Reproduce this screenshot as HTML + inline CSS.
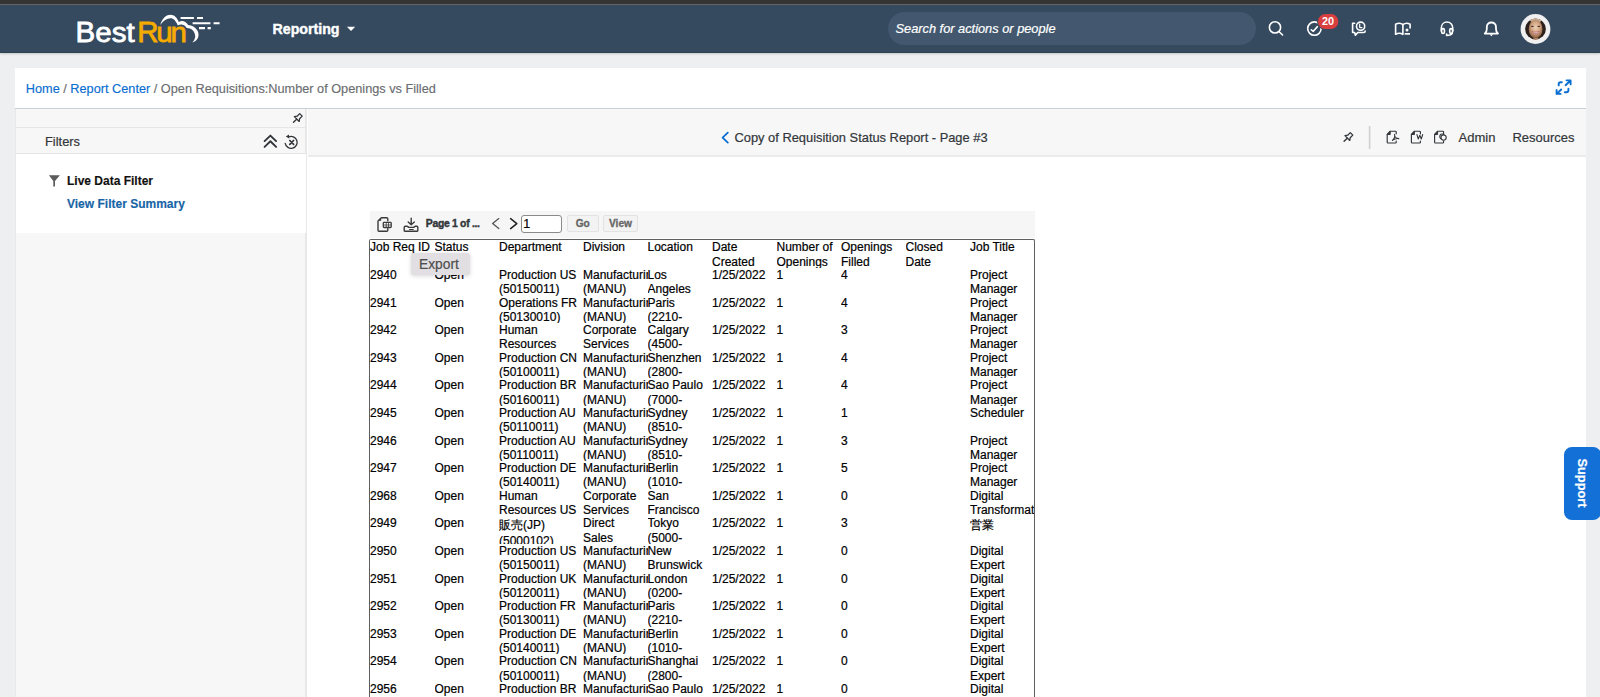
<!DOCTYPE html>
<html><head><meta charset="utf-8">
<style>
*{box-sizing:border-box;margin:0;padding:0}
html,body{width:1600px;height:697px;overflow:hidden;background:#edeff0;font-family:"Liberation Sans",sans-serif;position:relative}
.abs{position:absolute}
#topstrip{left:0;top:0;width:1600px;height:5px;background:#343434;border-bottom:1px solid #666}
#shell{left:0;top:5px;width:1600px;height:47.5px;background:#354a5f;border-bottom:1px solid #2f4154;box-shadow:0 1px 2px rgba(0,0,0,.18)}
#logo{left:75.6px;top:14.2px;font-size:29.5px;color:#fff;line-height:36px;-webkit-text-stroke:0.8px #fff;white-space:nowrap}
#logo .o{color:#f5aa00;-webkit-text-stroke:0.8px #f5aa00;letter-spacing:-2.2px;margin-left:2.6px}
#logo .x{display:inline-block;transform:scaleY(0.95);transform-origin:0 27.2px}
#reporting{left:272.5px;top:20px;font-weight:bold;font-size:14.2px;color:#fff;line-height:18px;-webkit-text-stroke:0.4px #fff}
#search{left:887.5px;top:12px;width:368px;height:33px;border-radius:16.5px;background:#43586e}
#search span{position:absolute;left:8px;top:9px;-webkit-text-stroke:0.2px #fff;font-style:italic;font-size:12.8px;color:#fff;line-height:16px}
#card{left:15px;top:68px;width:1571px;height:640px;background:#fff}
#bc{left:25.8px;top:81px;font-size:12.72px;line-height:16px;color:#6a6d70;-webkit-text-stroke:0.15px #6a6d70}
#bc a{-webkit-text-stroke:0.15px #0a6ed1}
#bc a{color:#0a6ed1;text-decoration:none}
#hline{left:15px;top:108px;width:1571px;height:1px;background:#c8d1da}
#lp{left:15px;top:109px;width:292px;height:600px;background:#f7f7f7;border-right:2px solid #e8e8e8;border-left:1px solid #e8e8e8}
#lpdiv1{left:16px;top:127px;width:290px;height:1px;background:#e6e6e6}
#lpdiv2{left:16px;top:153px;width:290px;height:1px;background:#e6e6e6}
#lpwhite{left:16px;top:154px;width:290px;height:78.5px;background:#fff}
#filters{left:45px;top:133.5px;font-size:12.86px;color:#32363a;-webkit-text-stroke:0.2px #32363a;line-height:16px}
#ldf{left:67px;top:174px;font-size:12px;font-weight:bold;color:#111;line-height:14px;-webkit-text-stroke:0.15px #111}
#vfs{left:67px;top:196.5px;font-size:12px;font-weight:bold;color:#1764a6;line-height:14px;-webkit-text-stroke:0.15px #1764a6}
#rph{left:308px;top:109px;width:1278px;height:48px;background:#f7f7f7;border-bottom:2px solid #ebebeb}
#title{left:734.5px;top:129.5px;font-size:12.86px;color:#32363a;-webkit-text-stroke:0.2px #32363a;line-height:16px}
#admin{left:1458.5px;top:130px;font-size:13.05px;color:#32363a;-webkit-text-stroke:0.2px #32363a;line-height:16px}
#resources{left:1512.5px;top:130px;font-size:12.97px;color:#32363a;-webkit-text-stroke:0.2px #32363a;line-height:16px}
#tb{left:370px;top:211px;width:665px;height:27px;background:#f6f6f6}
#tbl{left:369px;top:239px;width:666px;height:470px;padding-top:0.4px;border:1px solid #5e5e5e;border-bottom:none;border-radius:2px 2px 0 0;background:#fff;overflow:hidden}
.r{display:flex;height:27.6px;overflow:hidden}
.c{width:64.5px;flex:none;height:27.6px;overflow:hidden;font-size:12px;line-height:14.3px;color:#000;-webkit-text-stroke:0.2px #000}
.c:nth-child(3){width:84px}
#export{left:410.5px;top:252.6px;width:59px;height:22.8px;background:#e2dfe2;border-radius:2.5px;box-shadow:0 1px 4px rgba(0,0,0,.16)}
#export span{position:absolute;left:8.5px;top:4px;font-size:13.8px;color:#4e4e4e;line-height:16px;-webkit-text-stroke:0.2px #4e4e4e}
#support{left:1564px;top:446.7px;width:37px;height:73.6px;background:#1270d6;border-radius:8px}
#support span{position:absolute;left:50%;top:50%;transform:translate(-51.5%,-50%) rotate(90deg);color:#fff;font-weight:bold;font-size:12.8px;line-height:14px;white-space:nowrap;-webkit-text-stroke:0.2px #fff}
.tbt{font-weight:bold;font-size:10.4px;letter-spacing:-0.3px;color:#32363a;line-height:12px;-webkit-text-stroke:0.4px #32363a}
.btn{background:#f3f3f3;border:1px solid #e3e3e3;border-radius:2px;color:#666;font-weight:bold;font-size:10.2px;text-align:center;-webkit-text-stroke:0.3px #666}
</style></head><body>
<div class="abs" id="topstrip"></div>
<div class="abs" id="shell"></div>
<div class="abs" id="logo">B<span class="x">est</span><span class="o">R<span class="x">un</span></span></div>
<div class="abs" id="reporting">Reporting</div>
<div class="abs" id="search"><span>Search for actions or people</span></div>
<div class="abs" id="card"></div>
<div class="abs" id="bc"><a>Home</a> / <a>Report Center</a> / Open Requisitions:Number of Openings vs Filled</div>
<div class="abs" id="hline"></div>
<div class="abs" id="lp"></div>
<div class="abs" id="lpdiv1"></div>
<div class="abs" id="lpdiv2"></div>
<div class="abs" id="lpwhite"></div>
<div class="abs" id="filters">Filters</div>
<div class="abs" id="ldf">Live Data Filter</div>
<div class="abs" id="vfs">View Filter Summary</div>
<div class="abs" id="rph"></div>
<div class="abs" id="title">Copy of Requisition Status Report - Page #3</div>
<div class="abs" id="admin">Admin</div>
<div class="abs" id="resources">Resources</div>
<div class="abs" id="tb"></div>
<div class="abs tbt" style="left:425.8px;top:218px">Page 1 of ...</div>
<div class="abs" style="left:521.3px;top:214.5px;width:40.6px;height:18px;background:#fff;border:1px solid #8a8a8a;border-radius:3px;font-size:12.5px;line-height:16px;padding-left:1px;color:#000;-webkit-text-stroke:0.2px #000">1</div>
<div class="abs btn" style="left:567px;top:215px;width:31.5px;height:17px;line-height:15px">Go</div>
<div class="abs btn" style="left:603px;top:215px;width:35px;height:17px;line-height:15px">View</div>
<div class="abs" id="tbl">
<div class="r"><div class="c">Job Req ID</div><div class="c">Status</div><div class="c">Department</div><div class="c">Division</div><div class="c">Location</div><div class="c">Date Created</div><div class="c">Number of Openings</div><div class="c">Openings Filled</div><div class="c">Closed Date</div><div class="c">Job Title</div></div>
<div class="r"><div class="c">2940</div><div class="c">Open</div><div class="c">Production US (50150011)</div><div class="c">Manufacturing (MANU)</div><div class="c">Los Angeles</div><div class="c">1/25/2022</div><div class="c">1</div><div class="c">4</div><div class="c"></div><div class="c">Project Manager</div></div>
<div class="r"><div class="c">2941</div><div class="c">Open</div><div class="c">Operations FR (50130010)</div><div class="c">Manufacturing (MANU)</div><div class="c">Paris (2210-0001)</div><div class="c">1/25/2022</div><div class="c">1</div><div class="c">4</div><div class="c"></div><div class="c">Project Manager</div></div>
<div class="r"><div class="c">2942</div><div class="c">Open</div><div class="c">Human Resources</div><div class="c">Corporate Services</div><div class="c">Calgary (4500-0001)</div><div class="c">1/25/2022</div><div class="c">1</div><div class="c">3</div><div class="c"></div><div class="c">Project Manager</div></div>
<div class="r"><div class="c">2943</div><div class="c">Open</div><div class="c">Production CN (50100011)</div><div class="c">Manufacturing (MANU)</div><div class="c">Shenzhen (2800-0001)</div><div class="c">1/25/2022</div><div class="c">1</div><div class="c">4</div><div class="c"></div><div class="c">Project Manager</div></div>
<div class="r"><div class="c">2944</div><div class="c">Open</div><div class="c">Production BR (50160011)</div><div class="c">Manufacturing (MANU)</div><div class="c">Sao Paulo (7000-0001)</div><div class="c">1/25/2022</div><div class="c">1</div><div class="c">4</div><div class="c"></div><div class="c">Project Manager</div></div>
<div class="r"><div class="c">2945</div><div class="c">Open</div><div class="c">Production AU (50110011)</div><div class="c">Manufacturing (MANU)</div><div class="c">Sydney (8510-0001)</div><div class="c">1/25/2022</div><div class="c">1</div><div class="c">1</div><div class="c"></div><div class="c">Scheduler</div></div>
<div class="r"><div class="c">2946</div><div class="c">Open</div><div class="c">Production AU (50110011)</div><div class="c">Manufacturing (MANU)</div><div class="c">Sydney (8510-0001)</div><div class="c">1/25/2022</div><div class="c">1</div><div class="c">3</div><div class="c"></div><div class="c">Project Manager</div></div>
<div class="r"><div class="c">2947</div><div class="c">Open</div><div class="c">Production DE (50140011)</div><div class="c">Manufacturing (MANU)</div><div class="c">Berlin (1010-0001)</div><div class="c">1/25/2022</div><div class="c">1</div><div class="c">5</div><div class="c"></div><div class="c">Project Manager</div></div>
<div class="r"><div class="c">2968</div><div class="c">Open</div><div class="c">Human Resources US</div><div class="c">Corporate Services</div><div class="c">San Francisco</div><div class="c">1/25/2022</div><div class="c">1</div><div class="c">0</div><div class="c"></div><div class="c">Digital Transformation</div></div>
<div class="r"><div class="c">2949</div><div class="c">Open</div><div class="c"><span style="display:block;line-height:17.2px;padding-top:0.5px">販売(JP)</span>(5000102)</div><div class="c">Direct Sales</div><div class="c">Tokyo (5000-0001)</div><div class="c">1/25/2022</div><div class="c">1</div><div class="c">3</div><div class="c"></div><div class="c"><span style="display:block;line-height:17.2px;padding-top:0.5px">営業</span></div></div>
<div class="r"><div class="c">2950</div><div class="c">Open</div><div class="c">Production US (50150011)</div><div class="c">Manufacturing (MANU)</div><div class="c">New Brunswick</div><div class="c">1/25/2022</div><div class="c">1</div><div class="c">0</div><div class="c"></div><div class="c">Digital Expert</div></div>
<div class="r"><div class="c">2951</div><div class="c">Open</div><div class="c">Production UK (50120011)</div><div class="c">Manufacturing (MANU)</div><div class="c">London (0200-0001)</div><div class="c">1/25/2022</div><div class="c">1</div><div class="c">0</div><div class="c"></div><div class="c">Digital Expert</div></div>
<div class="r"><div class="c">2952</div><div class="c">Open</div><div class="c">Production FR (50130011)</div><div class="c">Manufacturing (MANU)</div><div class="c">Paris (2210-0001)</div><div class="c">1/25/2022</div><div class="c">1</div><div class="c">0</div><div class="c"></div><div class="c">Digital Expert</div></div>
<div class="r"><div class="c">2953</div><div class="c">Open</div><div class="c">Production DE (50140011)</div><div class="c">Manufacturing (MANU)</div><div class="c">Berlin (1010-0001)</div><div class="c">1/25/2022</div><div class="c">1</div><div class="c">0</div><div class="c"></div><div class="c">Digital Expert</div></div>
<div class="r"><div class="c">2954</div><div class="c">Open</div><div class="c">Production CN (50100011)</div><div class="c">Manufacturing (MANU)</div><div class="c">Shanghai (2800-0001)</div><div class="c">1/25/2022</div><div class="c">1</div><div class="c">0</div><div class="c"></div><div class="c">Digital Expert</div></div>
<div class="r"><div class="c">2956</div><div class="c">Open</div><div class="c">Production BR (50160011)</div><div class="c">Manufacturing (MANU)</div><div class="c">Sao Paulo (7000-0001)</div><div class="c">1/25/2022</div><div class="c">1</div><div class="c">0</div><div class="c"></div><div class="c">Digital Expert</div></div></div>
<div class="abs" id="export"><span>Export</span></div>
<div class="abs" id="support"><span>Support</span></div>
<svg class="abs" style="left:0;top:0" width="1600" height="697" viewBox="0 0 1600 697" fill="none" stroke-linecap="round" stroke-linejoin="round">
<!-- logo cloud -->
<path fill="#fff" d="M160.2 25 C162.6 17.5 166.6 14.8 170.4 14.8 C174.2 14.8 177 17.6 178.8 22 C181.6 20 185.4 20.6 188.2 25.1 C196 25.8 200.2 32.5 198 37.8 C197 40 195.2 41.8 192.2 42.6 C194.4 40.2 195.2 38 195.2 36.2 C195.2 31.4 191.4 28 186.8 28 C184.4 24.4 181 23.6 177.8 25.4 C176 20.8 173.4 18.2 170.4 18.2 C167 18.2 163.4 20.4 160.2 25 Z"/>
<path d="M180.6 18 H193.9 M197 18 H203 M192.6 23.3 H210.4 M213.6 23.3 H219.6 M199 28.1 H205 M207.6 28.1 H210.8" stroke="#fff" stroke-width="2.1" stroke-linecap="butt"/>
<!-- dropdown triangle -->
<path d="M346.9 26.8 H355.2 L351.05 31 Z" fill="#fff"/>
<!-- search -->
<g stroke="#fff" stroke-width="1.6">
<circle cx="1275" cy="27.4" r="5.6"/>
<path d="M1279.2 31.7 L1282.6 35"/>
</g>
<!-- check -->
<g stroke="#fff" stroke-width="1.6">
<circle cx="1314.4" cy="28.6" r="6.7"/>
<path d="M1311.3 29.8 L1313.3 31.3 L1317.4 26.6"/>
</g>
<rect x="1317.5" y="13.5" width="21.3" height="16" rx="8" fill="#da3f3f" stroke="#354a5f" stroke-width="1"/>
<text x="1328.1" y="25.3" fill="#fff" font-family="Liberation Sans" font-weight="bold" font-size="10.8" text-anchor="middle">20</text>
<!-- chat -->
<g stroke="#fff" stroke-width="1.6">
<path d="M1354.6 23.3 H1352.6 V32.5 H1354.6 L1355.4 35.3 L1357.8 32.5 H1363.8 C1364.7 32.5 1365.2 32 1365.2 31"/>
<circle cx="1360.6" cy="26.2" r="4.1"/>
<path d="M1359.7 24.2 V27.6 H1362" stroke-width="1.2"/>
</g>
<!-- book -->
<g stroke="#fff" stroke-width="1.6">
<path d="M1395.6 34.2 V24.2 C1398 23 1401 23 1402.9 24.6 C1405 23 1408 23 1410.1 24.2 V28"/>
<path d="M1395.6 34.2 C1398 33 1401 33 1402.9 34.4 V24.6"/>
</g>
<circle cx="1407" cy="30.1" r="1.5" fill="#fff"/>
<rect x="1404.6" y="33" width="5.4" height="1.7" fill="#fff"/>
<!-- headset -->
<g stroke="#fff" stroke-width="1.6">
<path d="M1441.3 31 V28 C1441.3 24.5 1443.8 22 1447 22 C1450.2 22 1452.8 24.5 1452.8 28 V31"/>
<rect x="1441.6" y="28.6" width="2.8" height="4.8" rx="1.4"/>
<rect x="1449.7" y="28.6" width="2.8" height="4.8" rx="1.4"/>
<path d="M1452.2 33.2 C1451.5 35 1449.5 35.4 1446.6 35.4 V34"/>
</g>
<!-- bell -->
<g stroke="#fff" stroke-width="1.8">
<path d="M1484.8 33.6 C1486.4 32.6 1486.8 31 1486.8 29 V27 C1486.8 24.3 1488.8 22.5 1491.4 22.5 C1494 22.5 1496 24.3 1496 27 V29 C1496 31 1496.4 32.6 1498 33.6 Z"/>
</g>
<path d="M1489.6 34.2 H1493.2 L1491.4 36.3 Z" fill="#fff"/>
<!-- avatar -->
<defs>
<radialGradient id="face" cx="0.5" cy="0.42" r="0.55"><stop offset="0" stop-color="#ecd0b4"/><stop offset="0.55" stop-color="#d2a684"/><stop offset="1" stop-color="#8f6246"/></radialGradient>
<clipPath id="avclip"><circle cx="1535.5" cy="29" r="10.4"/></clipPath>
</defs>
<circle cx="1535.5" cy="29" r="14.9" fill="#f0f0f0"/>
<g clip-path="url(#avclip)">
<rect x="1524" y="17" width="23" height="24" fill="#2b1f1a"/>
<ellipse cx="1535.8" cy="19.5" rx="6" ry="3.5" fill="#cdb39c"/>
<ellipse cx="1535.6" cy="29" rx="6.9" ry="9.2" fill="url(#face)"/>
<ellipse cx="1536" cy="40.5" rx="4" ry="2.5" fill="#b88a66"/>
<ellipse cx="1532.4" cy="26.4" rx="1.3" ry="0.7" fill="#3b2a24"/>
<ellipse cx="1538.8" cy="26.4" rx="1.3" ry="0.7" fill="#3b2a24"/>
<path d="M1532.4 31.6 C1534 34.2 1537.6 34.2 1539 31.4 C1537 32.4 1534.4 32.4 1532.4 31.6 Z" fill="#f2e6e6" stroke="#b5546a" stroke-width="0.6"/>
</g>
</svg>
<svg class="abs" style="left:0;top:0" width="1600" height="697" viewBox="0 0 1600 697" fill="none" stroke-linecap="round" stroke-linejoin="round">
<defs>
<g id="pin"><g transform="translate(301.4 114.4) rotate(45) scale(0.8)">
<path d="M-2.2 0.8 H2.2 V5.4 L4.3 8.2 H-4.3 L-2.2 5.4 Z" stroke-width="1.6"/>
<path d="M0 8.4 V14" stroke-width="1.7"/>
</g></g>
<g id="doc">
<path d="M0 3.2 L3 0 H8.2 C8.8 0 9 0.3 9 0.9 V2.6 M9 9.8 V11 C9 11.5 8.8 11.8 8.2 11.8 H0.8 C0.3 11.8 0 11.5 0 11 V3.2" stroke-width="1.15"/>
<path d="M0.2 3 L3 0.2 V3 Z" fill="#32363a" stroke-width="1"/>
</g>
</defs>
<g stroke="#32363a"><use href="#pin"/></g>
<g stroke="#32363a" transform="translate(1050.6 19)"><use href="#pin"/></g>
<!-- double chevron -->
<g stroke="#32363a" stroke-width="1.9">
<path d="M264.6 141.1 L270.4 135.6 L276.1 141.1"/>
<path d="M264.6 146.9 L270.4 141.3 L276.1 146.9"/>
</g>
<!-- reset x -->
<g stroke="#32363a" stroke-width="1.3">
<path d="M285.2 143.4 A6 6 0 1 0 288.6 136.9"/>
<path d="M289.8 140.5 L293.6 144.3 M293.6 140.5 L289.8 144.3" stroke-width="1.7"/>
</g>
<path d="M285.8 136.6 L289 134.6 L289.2 138.6 Z" fill="#32363a"/>
<!-- funnel -->
<path d="M48.9 175.3 H59.9 L55 180.9 V186.2 L53.3 186.8 V180.9 Z" fill="#5b5b5b"/>
<!-- toolbar export icon -->
<g stroke="#3a3a3a" stroke-width="1.4">
<path d="M378 221 L381.3 217.8 H386.6 C387.4 217.8 387.8 218.2 387.8 219 V220.8 M387.8 228.6 V230.2 C387.8 231 387.4 231.3 386.6 231.3 H379 C378.3 231.3 378 231 378 230.2 V221"/>
<rect x="383.3" y="222.3" width="7.9" height="5.2" rx="0.8" stroke-width="1.3"/>
</g>
<path d="M378.2 220.8 L381.2 217.9 V220.8 Z" fill="#3a3a3a"/>
<g fill="#3a3a3a"><rect x="385.8" y="222.6" width="0.8" height="4.6"/><rect x="388" y="222.6" width="0.8" height="4.6"/><rect x="383.6" y="224.6" width="7.4" height="0.8"/></g>
<!-- download icon -->
<g stroke="#3a3a3a" stroke-width="1.4">
<path d="M411.2 218.2 V224.5 M408.2 222 L411.2 224.7 L414.3 222"/>
<path d="M405.5 226.3 H407 C408 226.3 408.3 227.4 409.3 227.4 H413.2 C414.2 227.4 414.5 226.3 415.5 226.3 H416.8 C417.4 226.3 417.8 226.7 417.8 227.3 V230.4 C417.8 231 417.4 231.3 416.8 231.3 H405.2 C404.6 231.3 404.2 231 404.2 230.4 V227.3 C404.2 226.7 404.6 226.3 405.5 226.3 Z"/>
<path d="M409.5 229.5 H413.3" stroke-width="1"/>
</g>
<!-- toolbar chevrons -->
<g stroke="#555" stroke-width="1.3">
<path d="M498.8 218.6 L492.6 223.6 L498.8 228.6"/>
</g>
<g stroke="#222" stroke-width="1.5">
<path d="M510.6 218.6 L516.8 223.6 L510.6 228.6"/>
</g>
<!-- back chevron title -->
<path d="M727.8 132.6 L722.6 137.6 L727.8 142.6" stroke="#0a6ed1" stroke-width="1.8"/>
<!-- separator -->
<rect x="1368.8" y="126" width="1.6" height="23" fill="#d0d0d0"/>
<!-- doc icons -->
<g stroke="#32363a" fill="none">
<use href="#doc" transform="translate(1387.2 131.2)"/>
<use href="#doc" transform="translate(1411.4 131.2)"/>
<use href="#doc" transform="translate(1434.6 131.2)"/>
</g>
<!-- pdf swirl -->
<path d="M1392.4 140.4 C1394 139 1395.2 137 1394.6 134.4 C1394.4 136.6 1395.6 138.4 1398.8 138.6 C1396.6 138.3 1394 139.2 1392.4 140.4" stroke="#32363a" stroke-width="1.1"/>
<path d="M1416.9 134.5 L1418.3 139 L1419.8 135.2 L1421.3 139 L1422.7 134.5" stroke="#32363a" stroke-width="1.05"/>
<g stroke="#32363a" stroke-width="1.1"><circle cx="1442.2" cy="136.4" r="2.4"/><circle cx="1443.6" cy="137.6" r="2.6" fill="#f7f7f7"/></g>
<!-- expand icon -->
<g stroke="#0a6ed1" stroke-width="1.9">
<path d="M1565.6 85.2 L1570.3 80.6 M1566.6 80.4 H1570.6 V84.4"/>
<path d="M1561.2 89.5 L1556.8 93.9 M1556.6 89.9 V93.9 H1560.6"/>
<path d="M1558.7 85.4 V84 C1558.7 83 1559.6 82.3 1560.6 82.3 H1561.8"/>
<path d="M1564.8 92.3 H1566.3 C1567.5 92.3 1568.4 91.5 1568.4 90.3 V88.8"/>
</g>
</svg>
</body></html>
